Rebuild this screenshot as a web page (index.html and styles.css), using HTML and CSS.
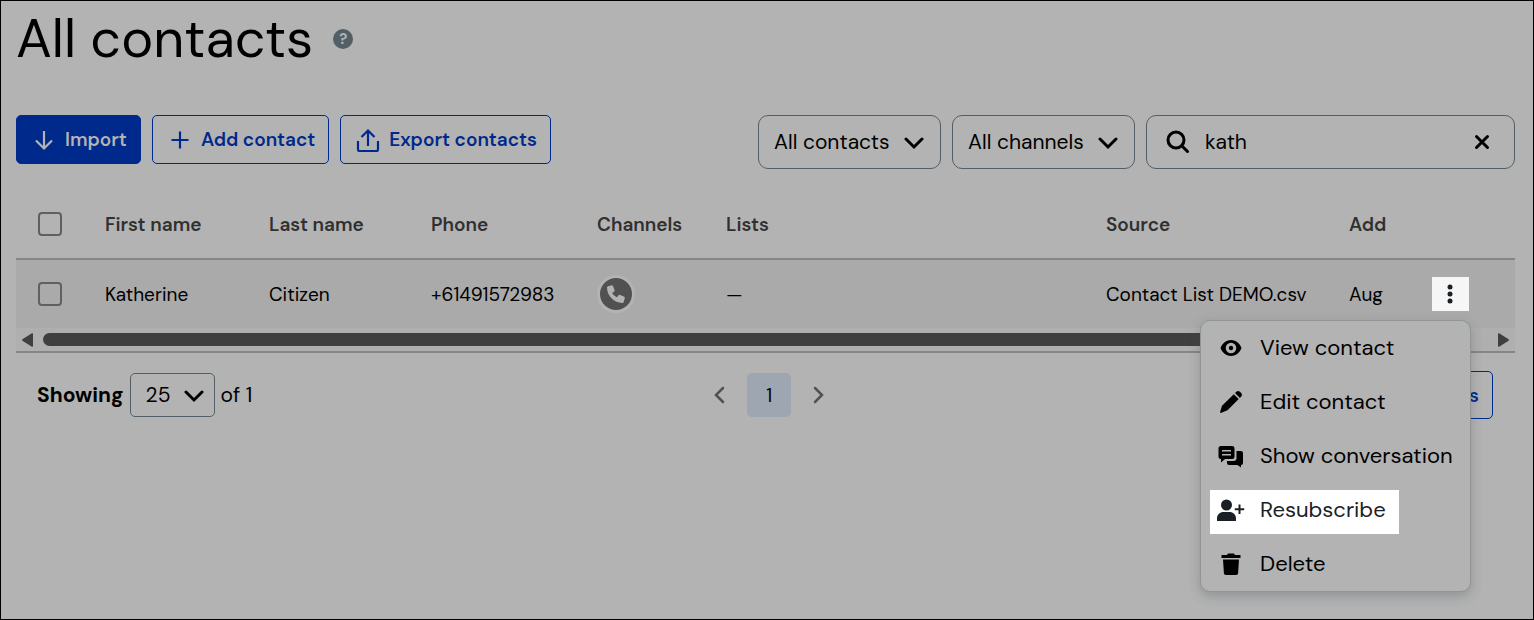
FILE: index.html
```html
<!DOCTYPE html>
<html lang="en">
<head>
    <meta charset="UTF-8">
    <meta name="viewport" content="width=device-width, initial-scale=1.0">
    <title>All contacts</title>
    <link rel="stylesheet" href="styles.css">
</head>
<body>
    <header class="page-header">
        <h1>All contacts</h1>
        <button class="help" aria-label="Help">?</button>
    </header>

    <div class="toolbar">
        <button class="btn btn-primary">
            <svg width="24" height="24" viewBox="0 0 24 24"><path d="M12 3v17M4 12.500l8 8 8-8"/></svg>
            Import
        </button>
        <button class="btn">
            <svg width="24" height="24" viewBox="0 0 24 24"><path d="M12 3.500v17M3.500 12h17"/></svg>
            Add contact
        </button>
        <button class="btn">
            <svg width="24" height="24" viewBox="0 0 24 24"><path d="M12 18V3M5.500 9L12 2.500 18.500 9M2 13v8.500a1.500 1.500 0 0 0 1.500 1.500h17a1.500 1.500 0 0 0 1.500-1.500V13"/></svg>
            Export contacts
        </button>

        <div class="filters">
            <div class="select-box">
                <select aria-label="Contacts">
                    <option>All contacts</option>
                </select>
                <svg width="20" height="14" viewBox="0 0 20 14"><path d="M2 3l8 8 8-8"/></svg>
            </div>
            <div class="select-box">
                <select aria-label="Channels">
                    <option>All channels</option>
                </select>
                <svg width="20" height="14" viewBox="0 0 20 14"><path d="M2 3l8 8 8-8"/></svg>
            </div>
            <div class="search">
                <svg width="24" height="24" viewBox="0 0 24 24"><circle cx="10" cy="10" r="8"/><path d="M16 16l5.500 5.500"/></svg>
                <input type="text" value="kath" aria-label="Search contacts">
                <button class="clear" aria-label="Clear search">
                    <svg width="16" height="16" viewBox="0 0 16 16"><path d="M2.500 2.500l11 11M13.500 2.500l-11 11"/></svg>
                </button>
            </div>
        </div>
    </div>

    <!-- Contacts table -->
    <table class="contacts">
        <colgroup>
            <col class="col-check">
            <col class="col-first">
            <col class="col-last">
            <col class="col-phone">
            <col class="col-channels">
            <col>
            <col class="col-source">
            <col class="col-added">
            <col class="col-actions">
        </colgroup>
        <thead>
            <tr>
                <th class="check"><input type="checkbox" aria-label="Select all"></th>
                <th>First name</th>
                <th>Last name</th>
                <th>Phone</th>
                <th>Channels</th>
                <th>Lists</th>
                <th>Source</th>
                <th>Add</th>
                <th></th>
            </tr>
        </thead>
        <tbody>
            <tr>
                <td class="check"><input type="checkbox" aria-label="Select Katherine Citizen"></td>
                <td>Katherine</td>
                <td>Citizen</td>
                <td>+61491572983</td>
                <td>
                    <span class="channel">
                        <svg width="18" height="18" viewBox="0 0 18 18"><path d="M4.900.200L1 1.300C.400 1.500 0 2 0 2.600 0 11 7 18 15.400 18c.600 0 1.100-.400 1.300-1l1.100-3.900c.100-.600-.200-1.200-.800-1.500l-4-1.700c-.500-.200-1.100-.100-1.400.400L10 12.300C7.500 11.100 6 9.500 5.200 8l2-1.600c.400-.300.600-.900.400-1.400L5.900 1C5.700.400 5.400.100 4.900.200z"/></svg>
                    </span>
                </td>
                <td>—</td>
                <td>Contact List DEMO.csv</td>
                <td>Aug</td>
                <td>
                    <div class="actions">
                        <button class="dots" aria-label="Actions">
                            <svg width="6" height="20" viewBox="0 0 6 20"><circle cx="3" cy="3" r="2.500"/><circle cx="3" cy="10" r="2.500"/><circle cx="3" cy="17" r="2.500"/></svg>
                        </button>
                        <div class="menu">
                            <button>
                                <svg width="28" height="24" viewBox="0 0 28 24"><path fill-rule="evenodd" d="M14 4C8.500 4 5 8 3.500 12 5 16 8.500 20 14 20s9-4 10.500-8C23 8 19.500 4 14 4zm0 2.700a5.300 5.300 0 1 1 0 10.600 5.300 5.300 0 0 1 0-10.600z"/><circle cx="14" cy="12" r="2.200"/></svg>
                                View contact
                            </button>
                            <button>
                                <svg width="28" height="24" viewBox="0 0 28 24"><path d="M16.800 4.200l4.900 4.900L10.500 20.300 3.800 23l-.800-.800 2-6.500zM18 3l1.300-1.300c1-1 2.600-1 3.500 0l1.400 1.400c1 1 1 2.500 0 3.500L22.900 7.900z"/></svg>
                                Edit contact
                            </button>
                            <button>
                                <svg width="28" height="24" viewBox="0 0 28 24"><path fill-rule="evenodd" d="M4 2h11a2.500 2.500 0 0 1 2.500 2.500v8A2.500 2.500 0 0 1 15 15H8l-4 3.500V15a2.500 2.500 0 0 1-2.500-2.500v-8A2.500 2.500 0 0 1 4 2zm1 4v1.500h9V6zm0 4v1.500h9V10z"/><path d="M19.500 7H24a2 2 0 0 1 2 2v10a2 2 0 0 1-2 2v2.500L20.500 21H12a2 2 0 0 1-2-2v-2h6.500a3 3 0 0 0 3-3z"/></svg>
                                Show conversation
                            </button>
                            <button class="current">
                                <svg width="28" height="24" viewBox="0 0 28 24"><circle cx="9.500" cy="7" r="5.500"/><path d="M0 23v-2.500c0-4 3-6.500 6.500-6.500h6c3.500 0 6.500 2.500 6.500 6.500V23zM21.500 6.500h2v3.700h3.700v2h-3.700v3.700h-2v-3.700h-3.700v-2h3.700z"/></svg>
                                Resubscribe
                            </button>
                            <button>
                                <svg width="28" height="24" viewBox="0 0 28 24"><path d="M4.500 3H10l1-1.500h6L18 3h5.500v3h-19zM6 7.500h16l-.900 13.500a2 2 0 0 1-2 2H8.900a2 2 0 0 1-2-2z"/></svg>
                                Delete
                            </button>
                        </div>
                    </div>
                </td>
            </tr>
        </tbody>
    </table>
    <div class="scrollbar">
        <svg width="12" height="14" viewBox="0 0 12 14"><path d="M9.500.500L.800 6a1.200 1.200 0 0 0 0 2l8.700 5.600c.800.500 1.500.200 1.500-.600V1c0-.800-.700-1-1.500-.500z"/></svg>
        <div class="track"><div class="thumb"></div></div>
        <svg width="12" height="14" viewBox="0 0 12 14"><path d="M2.500.500L11.200 6a1.200 1.200 0 0 1 0 2l-8.700 5.600c-.800.500-1.500.200-1.500-.600V1c0-.800.700-1 1.500-.500z"/></svg>
    </div>

    <footer class="table-footer">
        <div class="page-size">
            <label for="pageSize">Showing</label>
            <div class="select-box small">
                <select id="pageSize">
                    <option>25</option>
                    <option>50</option>
                </select>
                <svg width="20" height="14" viewBox="0 0 20 14"><path d="M2 3l8 8 8-8"/></svg>
            </div>
            <span>of 1</span>
        </div>
        <nav class="pagination">
            <button aria-label="Previous page"><svg width="12" height="18" viewBox="0 0 12 18"><path d="M10 2L3 9l7 7"/></svg></button>
            <button class="page">1</button>
            <button aria-label="Next page"><svg width="12" height="18" viewBox="0 0 12 18"><path d="M2 2l7 7-7 7"/></svg></button>
        </nav>
        <button class="btn btn-footer">Lists</button>
    </footer>
</body>
</html>
```
FILE: styles.css
```css
* {
    box-sizing: border-box;
}
body {
    margin: 0;
    min-height: 100vh;
    padding: 0 18px 0 15px;
    border: 1px solid #000;
    background-color: #b3b3b3;
    color: #000;
    font-family: "DM Sans", Inter, "Liberation Sans", sans-serif;
    font-size: 19px;
}
button, input, select {
    font-family: inherit;
    font-size: inherit;
    color: inherit;
    cursor: pointer;
}
svg {
    flex: none;
}

.page-header {
    display: flex;
    align-items: center;
    gap: 20px;
    height: 76px;
    margin-bottom: 38px;
}
h1 {
    margin: 0;
    font-size: 54px;
    font-weight: 400;
    line-height: 76px;
}
.help {
    width: 20px;
    height: 20px;
    padding: 0;
    border: none;
    border-radius: 50%;
    background-color: #535f66;
    color: #b3b3b3;
    font-size: 15px;
    font-weight: 700;
    line-height: 20px;
}

.toolbar {
    display: flex;
    align-items: flex-start;
    gap: 11px;
    margin-bottom: 21px;
}
.btn {
    display: flex;
    align-items: center;
    gap: 9px;
    height: 49px;
    padding: 0 13px 0 15px;
    border: 1px solid #00298c;
    border-radius: 5px;
    background: none;
    color: #00298c;
    font-weight: 600;
    white-space: nowrap;
}
.btn svg {
    fill: none;
    stroke: currentColor;
    stroke-width: 2.2;
}
.btn-primary {
    background-color: #00298c;
    color: #b3b3b3;
}

.filters {
    display: flex;
    gap: 11px;
    margin-left: auto;
    font-size: 21px;
}
.select-box {
    position: relative;
    width: 183px;
}
.select-box select {
    width: 100%;
    height: 54px;
    padding: 0 15px;
    border: 1px solid #535f66;
    border-radius: 10px;
    background: none;
    appearance: none;
}
.select-box svg {
    position: absolute;
    top: 50%;
    right: 17px;
    margin-top: -6px;
    pointer-events: none;
    fill: none;
    stroke: #000;
    stroke-width: 3;
    stroke-linecap: round;
}
.search {
    display: flex;
    align-items: center;
    gap: 15px;
    width: 369px;
    height: 54px;
    padding: 0 24px 0 19px;
    border: 1px solid #535f66;
    border-radius: 10px;
}
.search svg {
    display: block;
    fill: none;
    stroke: #000;
    stroke-width: 3;
    stroke-linecap: round;
}
.search input {
    flex: 1;
    min-width: 0;
    padding: 0;
    border: none;
    outline: none;
    background: none;
}
.clear {
    padding: 0;
    border: none;
    background: none;
}

.contacts {
    width: 100%;
    table-layout: fixed;
    border-collapse: separate;
    border-spacing: 0;
}
.col-check { width: 73px; }
.col-first { width: 164px; }
.col-last { width: 162px; }
.col-phone { width: 166px; }
.col-channels { width: 129px; }
.col-source { width: 243px; }
.col-added { width: 83px; }
.col-actions { width: 99px; }
th, td {
    height: 68px;
    padding: 0 0 0 16px;
    text-align: left;
    white-space: nowrap;
}
th {
    height: 70px;
    border-bottom: 2px solid #868686;
    color: #303030;
    font-weight: 600;
}
td {
    background-color: #aaaaaa;
}
.check {
    padding-left: 22px;
}
.check input {
    display: block;
    width: 24px;
    height: 24px;
    margin: 0;
    border: 2px solid #606060;
    border-radius: 4px;
    appearance: none;
}
.channel {
    display: flex;
    align-items: center;
    justify-content: center;
    width: 38px;
    height: 38px;
    border: 3px solid #b3b3b3;
    border-radius: 50%;
    background-color: #515151;
}
.channel svg {
    fill: #b3b3b3;
}

.actions {
    position: relative;
    width: 37px;
}
.dots {
    display: flex;
    align-items: center;
    justify-content: center;
    width: 37px;
    height: 34px;
    padding: 0 2px 0 0;
    border: none;
    background-color: #f6f6f6;
    fill: #1b2026;
}
.menu {
    position: absolute;
    top: 43px;
    right: -2px;
    z-index: 10;
    display: flex;
    flex-direction: column;
    align-items: flex-start;
    gap: 10px;
    width: 271px;
    padding: 7px 9px 3px;
    border: 1px solid #8f9598;
    border-radius: 10px;
    background-color: #b3b3b3;
    box-shadow: 0 4px 12px rgba(60, 70, 75, 0.3);
}
.menu button {
    display: flex;
    align-items: center;
    gap: 15px;
    height: 44px;
    padding: 0 13px 5px 7px;
    border: none;
    background: none;
    font-size: 22px;
}
.menu .current {
    background-color: #fff;
    color: #1b2026;
    fill: #1b2026;
}

.scrollbar {
    display: flex;
    align-items: center;
    gap: 9px;
    height: 25px;
    padding: 0 6px;
    border-bottom: 2px solid #868686;
    background-color: #afafaf;
    fill: #3f3f3f;
}
.track {
    flex: 1;
}
.thumb {
    width: 92%;
    height: 13px;
    border-radius: 7px;
    background-color: #3f3f3f;
}

.table-footer {
    display: flex;
    align-items: center;
    justify-content: space-between;
    margin-top: 18px;
    padding: 0 22px 0 21px;
}
.page-size {
    display: flex;
    align-items: center;
    gap: 6px;
    font-size: 21px;
}
.page-size label {
    font-weight: 700;
}
.small {
    width: 85px;
}
.small select {
    display: block;
    height: 44px;
    border-radius: 5px;
}
.small svg {
    right: 11px;
}
.pagination {
    display: flex;
    align-items: center;
    gap: 22px;
}
.pagination button {
    padding: 0;
    border: none;
    background: none;
}
.pagination svg {
    display: block;
    fill: none;
    stroke: #515151;
    stroke-width: 2.5;
    stroke-linecap: round;
}
.pagination .page {
    width: 44px;
    height: 44px;
    border-radius: 5px;
    background-color: #9ea6b1;
}
.btn-footer {
    justify-content: flex-end;
    width: 207px;
    height: 48px;
}
```
